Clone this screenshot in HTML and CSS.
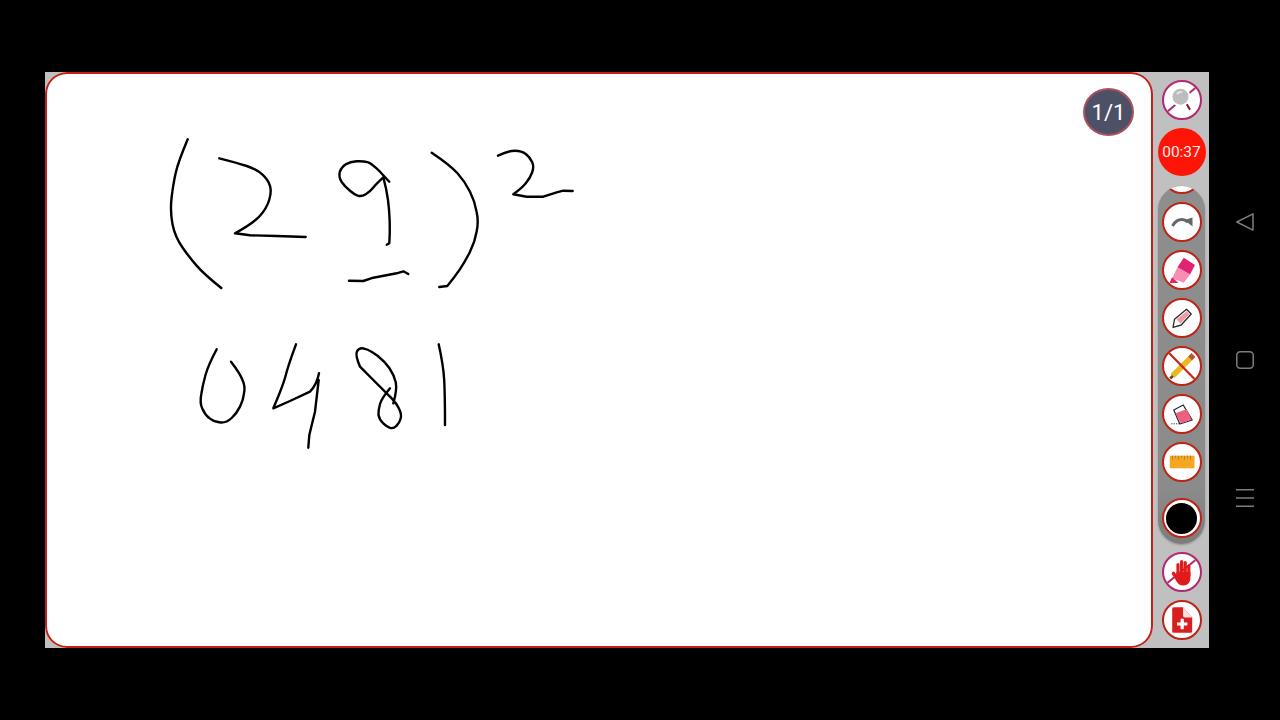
FILE: index.html
```html
<!DOCTYPE html>
<html lang="en">
<head>
<meta charset="utf-8">
<title>Whiteboard</title>
<link rel="stylesheet" href="styles.css">
</head>
<body>
<div class="screen">
  <main class="app">
    <section class="board">
      <svg class="sketch" viewBox="45 72 1108 576" aria-hidden="true">
        <path d="M187.7 139.3Q178.3 161.7 175.8 172.5Q173.3 183.3 171.6 197.5Q170 211.7 172.5 224.2Q175 236.7 182.5 247.5Q190 258.3 197.5 266.6Q205 275 221.3 288"/>
        <path d="M219.3 158.3Q236.7 162.7 246.7 166Q256.7 169.3 262.5 174.6Q268.3 180 270 185.8Q271.7 191.7 269.2 200Q266.7 208.3 260 215.8Q253.3 223.3 235 233.3L250 235.3L276.7 236L305.7 237"/>
        <path d="M389.3 181.7L380 171.7Q371.7 163.3 367.5 162.1Q363.3 161 356.6 161.3Q350 161.7 345.8 164.2Q341.7 166.7 339.8 171.7Q338.5 176.7 341.5 181.7Q345 186.7 350 190.8Q355 195 358.3 195.8Q361.7 196.7 365.8 194.2Q370 191.7 373.3 187.5Q376.7 183.3 383.3 177.3Q386.7 190 388 200Q389.3 210 389.7 221.6Q390 233.3 389.3 243.3L386.7 244.7"/>
        <path d="M349 280.7L363.3 281L373.3 277.7L396.7 273.3L403.3 271.3L408.3 274"/>
        <path d="M431.7 152.7Q450 165 457.5 173.3Q465 181.7 470 191.7Q475 201.7 476.6 211.7Q478.8 221.7 476.6 231.7Q475 241.7 470 251.7Q465 261.7 460 269.2Q455 276.7 447.3 286L439.3 287"/>
        <path d="M498 155.7Q508.3 150.7 515 150.7Q521.7 150.7 525.8 154Q530 157.3 532.1 162Q534.3 166.7 532.1 172.5Q530 178.3 525.8 183.3Q521.7 188.3 513.3 194.3L526.7 196.7L543.3 196.7L556.7 192.3L563.3 190.7L572.7 191"/>
        <path d="M216.7 349.3Q208.3 365 205.5 375Q202.7 385 201.3 394Q199.5 403.3 202.5 409Q205 415 210 418.6Q215 422.3 220.8 422.5Q226.7 422.7 231.7 418Q236.7 413.3 240 406.6Q243.3 400 244 393.3Q245.5 386.7 242.5 380Q240 373.3 231 361.7"/>
        <path d="M296 344.3Q288.3 365 285.8 375Q283.3 385 273.3 408.3L290 401L310 391.7Q316.7 385 319 373.3M318.7 380L315 411.7L309.3 435L308.3 447.7"/>
        <path d="M390 388.3Q381.7 398.3 380 404Q378.3 410 378.5 415Q379.5 420 383.3 423.3Q386.7 426.7 390 427.8Q393.3 429 396.3 426Q399.3 423.3 400.5 419Q402 415 399.2 409Q396.7 403.3 391.7 398.3L373.3 380L360 366.7Q355 355 357 351.3Q359.5 347 365 348.8Q370 350 377.5 355.8Q385 361.7 389.5 368.3Q394 375 395.8 382.5Q397.2 390 393.3 403.3"/>
        <path d="M438.7 344.3Q443.3 365 444.2 380Q445 395 445 425"/>
      </svg>
      <div class="page-badge">1/1</div>
    </section>

    <aside class="sidebar">
      <button class="tool tool-ban">
        <svg viewBox="0 0 36 36">
          <path d="M1.5 31.3L34.8 3" stroke="#b2286e" stroke-width="2"/>
          <circle cx="16.5" cy="14.7" r="10" fill="#fff"/>
          <circle cx="16.5" cy="14.7" r="8" fill="#bdbdbd"/>
          <path d="M13 12Q15 9.5 18 10" fill="none" stroke="#f2f2f2" stroke-width="1.4"/>
          <path d="M22.8 22.3L26 27.8" stroke="#8e1020" stroke-width="2"/>
        </svg>
      </button>
      <div class="timer">00:37</div>
      <div class="tray">
        <button class="tool tool-clipped"></button>
        <button class="tool">
          <svg viewBox="0 0 36 36">
            <path d="M8.5 22Q12 15.5 18 15.5Q21 15.5 24 18" fill="none" stroke="#666" stroke-width="3"/>
            <path d="M20.5 16L28.5 13.5V22.5Z" fill="#666"/>
          </svg>
        </button>
        <button class="tool">
          <svg viewBox="0 0 36 36">
            <path d="M19.8 5.8L31 13L26 22.5L13.4 15.3Z" fill="#e0246f"/>
            <path d="M13.4 15.3L26 22.5L19.8 30.7L8.2 26.3Z" fill="#f78fb3"/>
            <path d="M8 25.3L14.5 31H5.5Z" fill="#dc2470"/>
          </svg>
        </button>
        <button class="tool">
          <svg viewBox="0 0 36 36">
            <path d="M9 27.3L10.5 19.3L22.5 9.3L27.2 14L17.2 25Z" fill="#fff" stroke="#2b2b2b" stroke-width="1.3" stroke-linejoin="round"/>
            <path d="M12.5 19.3L22.8 11.2L25.2 14.4L16.5 23.6Z" fill="#f09aa6"/>
          </svg>
        </button>
        <button class="tool">
          <svg viewBox="0 0 36 36">
            <path d="M8.5 28L26 10.5" stroke="#e9b71e" stroke-width="5.5"/>
            <path d="M26 10.5L29.5 7" stroke="#b5572f" stroke-width="5.5"/>
            <path d="M6.2 30.5L8.8 27.9" stroke="#55472a" stroke-width="2.6"/>
            <path d="M4.8 4.7L31.5 32" stroke="#c8251a" stroke-width="2.2"/>
          </svg>
        </button>
        <button class="tool">
          <svg viewBox="0 0 36 36">
            <path d="M9.8 14L19.2 9L28.2 24L15.8 28Z" fill="#fff" stroke="#2b2b2b" stroke-width="1.3" stroke-linejoin="round"/>
            <path d="M11.5 17.3L22.5 13.3L27.6 23.6L16.8 27.3Z" fill="#ef5f7f"/>
            <path d="M7.2 27.8H15" stroke="#333" stroke-width="1" stroke-dasharray="1.2 1.2"/>
          </svg>
        </button>
        <button class="tool">
          <svg viewBox="0 0 36 36">
            <rect x="5.8" y="11.7" width="24.7" height="12.6" fill="#f5a623"/>
            <path d="M8.5 11.7v4M11.5 11.7v2.5M14.5 11.7v4M17.5 11.7v2.5M20.5 11.7v4M23.5 11.7v2.5M26.5 11.7v4" stroke="#b9770f" stroke-width=".8"/>
          </svg>
        </button>
        <button class="tool tool-colour"><span class="swatch"></span></button>
      </div>
      <button class="tool tool-ban tool-gap">
        <svg viewBox="0 0 36 36">
          <path d="M2 30L34 4" stroke="#b2286e" stroke-width="2"/>
          <path d="M14 22V10.5M17.6 22V7.5M21.2 22V8.5M24.8 22V12" stroke="#e01b1b" stroke-width="3.2" stroke-linecap="round"/>
          <path d="M9.5 19.5L14 26" stroke="#e01b1b" stroke-width="3.6" stroke-linecap="round"/>
          <path d="M12.4 18H26.4V24C26.4 28.5 23.5 31.5 19.2 31.5C16 31.5 14 30 12.4 27Z" fill="#e01b1b"/>
        </svg>
      </button>
      <button class="tool tool-gap">
        <svg viewBox="0 0 36 36">
          <path d="M9.7 5.3H19L28.2 15.5V29.2A1.5 1.5 0 0 1 26.7 30.7H9.7A1.5 1.5 0 0 1 8.2 29.2V6.8A1.5 1.5 0 0 1 9.7 5.3Z" fill="#d9201f"/>
          <path d="M19 5.3V13.5Q19 15.5 21 15.5H28.2Z" fill="#fbe3e0"/>
          <path d="M18.2 16.8V27.2M13 22H23.4" stroke="#fff" stroke-width="3.2"/>
        </svg>
      </button>
    </aside>
  </main>

  <nav class="nav-bar">
    <svg class="nav-icon" viewBox="0 0 18 18"><path d="M.8 9L17 .9V17.1Z"/></svg>
    <svg class="nav-icon" viewBox="0 0 18 18"><rect x=".8" y=".8" width="16.4" height="16.4" rx="3.5"/></svg>
    <svg class="nav-icon" viewBox="0 0 18 18"><path d="M0 .8H18M0 9H18M0 17.2H18"/></svg>
  </nav>
</div>
</body>
</html>
```
FILE: styles.css
```css
* {
  box-sizing: border-box;
}

html,
body {
  margin: 0;
  height: 100%;
  background: #000;
  overflow: hidden;
  font-family: Roboto, "Liberation Sans", sans-serif;
}

.screen {
  display: flex;
  align-items: center;
  height: 720px;
  padding-left: 45px;
}

.app {
  display: flex;
  width: 1164px;
  height: 576px;
  background: #c0c0c0;
}

.board {
  position: relative;
  width: 1108px;
  height: 576px;
  background: #fff;
  border-radius: 22px;
  box-shadow: inset 0 0 0 2px #c4201a;
}

.sketch {
  position: absolute;
  top: 0;
  left: 0;
  width: 1108px;
  height: 576px;
  fill: none;
  stroke: #000;
  stroke-width: 2.4;
  stroke-linecap: round;
  stroke-linejoin: round;
}

.page-badge {
  position: absolute;
  top: 16px;
  left: 1038px;
  width: 51px;
  height: 48px;
  display: flex;
  align-items: center;
  justify-content: center;
  border-radius: 50%;
  background: #4d5168;
  border: 2px solid #a9525c;
  color: #fff;
  font-size: 22px;
}

.sidebar {
  width: 56px;
  height: 576px;
  padding: 8px 0 0 1px;
  display: flex;
  flex-direction: column;
  align-items: center;
}

.tool {
  flex: none;
  width: 40px;
  height: 40px;
  padding: 0;
  display: block;
  background: #fff;
  border: 2px solid #bd2416;
  border-radius: 50%;
  overflow: hidden;
}

.tool svg {
  display: block;
  width: 36px;
  height: 36px;
}

.tool-ban {
  border-color: #b2286e;
}

.tool-gap {
  margin-top: 8px;
}

.timer {
  flex: none;
  width: 48px;
  height: 48px;
  margin-top: 8px;
  display: flex;
  align-items: center;
  justify-content: center;
  background: #ff1408;
  border-radius: 50%;
  color: #ffeee6;
  font-size: 15.5px;
}

.tray {
  flex: none;
  width: 47px;
  height: 358px;
  margin-top: 10px;
  padding-bottom: 6px;
  display: flex;
  flex-direction: column;
  align-items: center;
  gap: 8px;
  overflow: hidden;
  background: linear-gradient(#8e8e8e, #8b8b8b 85%, #7c7c7c);
  border-radius: 24px;
  box-shadow: 0 1px 2px rgba(0, 0, 0, .25);
}

.tool-clipped {
  margin-top: -32px;
}

.tool-colour {
  margin-top: 8px;
  display: flex;
  align-items: center;
  justify-content: center;
}

.swatch {
  width: 31px;
  height: 31px;
  background: #000;
  border-radius: 50%;
}

.nav-bar {
  width: 71px;
  height: 720px;
  display: flex;
  flex-direction: column;
  align-items: center;
  justify-content: center;
  gap: 120px;
}

.nav-icon {
  width: 18px;
  height: 18px;
  fill: none;
  stroke: #7d7d7d;
  stroke-width: 1.5;
  stroke-linejoin: round;
}
```
